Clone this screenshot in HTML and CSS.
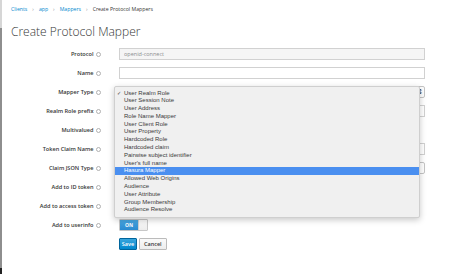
FILE: index.html
```html
<!DOCTYPE html>
<html lang="en">
<head>
<meta charset="UTF-8">
<meta name="viewport" content="width=device-width, initial-scale=1.0">
<title>Create Protocol Mapper</title>
<link rel="stylesheet" href="styles.css">
</head>
<body>
  <div class="frame">
    <div class="edge"></div>
    <main class="page">
      <ol class="crumbs">
        <li><a href="#">Clients</a></li>
        <li><a href="#">app</a></li>
        <li><a href="#">Mappers</a></li>
        <li class="current">Create Protocol Mappers</li>
      </ol>
      <h1>Create Protocol Mapper</h1>

      <form class="mapper-form">
        <label class="lbl">Protocol <i class="help"></i></label>
        <div class="ctrl"><input class="field readonly" type="text" value="openid-connect" readonly></div>

        <label class="lbl">Name <i class="help"></i></label>
        <div class="ctrl"><input class="field" type="text"></div>

        <label class="lbl">Mapper Type <i class="help"></i></label>
        <div class="ctrl type-cell">
          <div class="field select"><span class="arrows">&#x2195;</span></div>
          <ul class="menu">
            <li class="checked">User Realm Role</li>
            <li>User Session Note</li>
            <li>User Address</li>
            <li>Role Name Mapper</li>
            <li>User Client Role</li>
            <li>User Property</li>
            <li>Hardcoded Role</li>
            <li>Hardcoded claim</li>
            <li>Pairwise subject identifier</li>
            <li>User's full name</li>
            <li class="active">Hasura Mapper</li>
            <li>Allowed Web Origins</li>
            <li>Audience</li>
            <li>User Attribute</li>
            <li>Group Membership</li>
            <li>Audience Resolve</li>
          </ul>
        </div>

        <label class="lbl">Realm Role prefix <i class="help"></i></label>
        <div class="ctrl"><input class="field" type="text"></div>

        <label class="lbl">Multivalued <i class="help"></i></label>
        <div class="ctrl"><span class="toggle"><span class="on"></span><span class="knob"></span></span></div>

        <label class="lbl">Token Claim Name <i class="help"></i></label>
        <div class="ctrl"><input class="field" type="text"></div>

        <label class="lbl">Claim JSON Type <i class="help"></i></label>
        <div class="ctrl"><div class="field select"></div></div>

        <label class="lbl">Add to ID token <i class="help"></i></label>
        <div class="ctrl"><span class="toggle"><span class="on"></span><span class="knob"></span></span></div>

        <label class="lbl">Add to access token <i class="help"></i></label>
        <div class="ctrl"><span class="toggle"><span class="on"></span><span class="knob"></span></span></div>

        <label class="lbl">Add to userinfo <i class="help"></i></label>
        <div class="ctrl"><span class="toggle"><span class="on">ON</span><span class="knob"></span></span></div>

        <span></span>
        <div class="ctrl actions">
          <button type="submit" class="btn primary">Save</button>
          <button type="button" class="btn">Cancel</button>
        </div>
      </form>
    </main>
  </div>
</body>
</html>
```

FILE: styles.css
```css
body {
  margin: 0;
  padding: 0;
  background-color: #fff;
  font-family: "Open Sans", Arial, sans-serif;
  color: #363636;
}

.frame {
  display: flex;
  height: 274px;
}

.edge {
  width: 2px;
  background: linear-gradient(#d6d6d6 0, #d6d6d6 28px, #8e8e8e 28px, #8e8e8e 268px, #222 268px);
}

.page {
  flex: 1;
  padding-left: 9px;
}

.crumbs {
  list-style: none;
  margin: 0;
  padding: 6px 0 0;
  display: flex;
  font-size: 5.2px;
  line-height: 6px;
}

.crumbs li + li::before {
  content: "\203A";
  color: #8b8d8f;
  padding: 0 5px;
}

.crumbs a {
  color: #0088ce;
  text-decoration: none;
}

.crumbs .current {
  color: #363636;
}

h1 {
  margin: 13px 0 9px;
  font-size: 12px;
  line-height: 14px;
  font-weight: 300;
  color: #363636;
}

.mapper-form {
  display: grid;
  grid-template-columns: 90px 306px;
  grid-auto-rows: 12px;
  column-gap: 18px;
  row-gap: 7px;
}

.lbl {
  align-self: center;
  text-align: right;
  font-size: 5.6px;
  font-weight: 600;
  line-height: 12px;
  white-space: nowrap;
}

.help {
  display: inline-block;
  width: 3px;
  height: 3px;
  border: 0.7px solid #b0b0b0;
  border-radius: 50%;
  vertical-align: middle;
  margin-left: 1px;
}

.ctrl {
  display: flex;
  align-items: center;
}

.field {
  box-sizing: border-box;
  width: 100%;
  height: 12px;
  margin: 0;
  padding: 0 4px;
  border: 1px solid #d1d1d1;
  background-color: #fff;
  font-family: "Open Sans", Arial, sans-serif;
  font-size: 5.5px;
  color: #363636;
  outline: none;
}

.field.readonly {
  background-color: #f5f5f5;
  color: #8b8d8f;
}

.select {
  position: relative;
  border-color: #c5c5c5;
  border-radius: 2px;
}

.arrows {
  position: absolute;
  right: 1px;
  top: 0;
  font-size: 7px;
  line-height: 10px;
  color: #333;
  font-family: "DejaVu Sans", sans-serif;
}

.type-cell {
  position: relative;
  z-index: 2;
}

.menu {
  position: absolute;
  left: -5px;
  top: 0;
  width: 306px;
  box-sizing: border-box;
  margin: 0;
  padding: 2.5px 0 2.5px;
  list-style: none;
  background-color: #f0f0f0;
  border: 1px solid #cfcfcf;
  border-radius: 2px;
  box-shadow: 0 2px 6px rgba(0, 0, 0, 0.22);
  font-family: "Liberation Sans", Arial, sans-serif;
  font-size: 6px;
  line-height: 7.8px;
  color: #3a3a3a;
}

.menu li {
  position: relative;
  padding-left: 9px;
}

.menu .checked::before {
  content: "\2713";
  position: absolute;
  left: 2px;
  font-family: "DejaVu Sans", sans-serif;
  font-size: 5px;
}

.menu .active {
  background-color: #4a8ff0;
  color: #fff;
}

.toggle {
  display: flex;
  height: 12px;
  width: 29px;
  box-sizing: border-box;
  border: 1px solid #c7c7c7;
  border-radius: 1px;
  overflow: hidden;
}

.toggle .on {
  width: 18px;
  background: linear-gradient(#48a8e2, #2a8ad0);
  color: #fff;
  font-size: 5px;
  font-weight: 700;
  line-height: 10px;
  text-align: center;
}

.toggle .knob {
  flex: 1;
  background: linear-gradient(#fafafa, #ececec);
  border-left: 1px solid #d0d0d0;
}

.actions {
  gap: 2px;
}

.btn {
  height: 12px;
  padding: 0 4px;
  border: 1px solid #bbb;
  border-radius: 1px;
  background: linear-gradient(#fafafa, #ededed);
  font-family: "Open Sans", Arial, sans-serif;
  font-size: 5.5px;
  font-weight: 600;
  color: #363636;
  cursor: pointer;
}

.btn.primary {
  width: 18px;
  padding: 0;
  border-color: #00659c;
  background: linear-gradient(#39a5dc, #0088ce);
  color: #fff;
}
```
